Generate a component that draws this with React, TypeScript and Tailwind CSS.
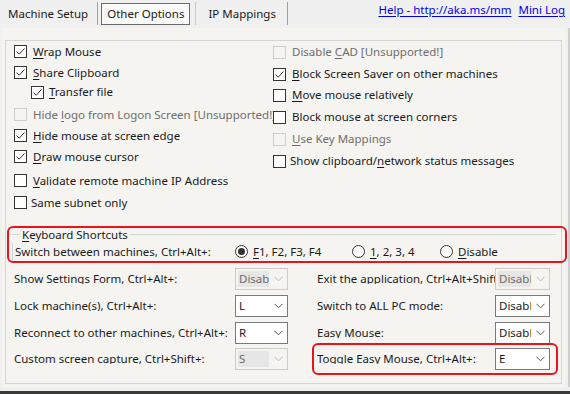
import { ReactNode } from "react";

const U = ({ children }: { children: ReactNode }) => <span className="underline underline-offset-2">{children}</span>;

const Check = ({ checked, disabled }: { checked?: boolean; disabled?: boolean }) => (
  <span
    className={`flex h-[13px] w-[13px] shrink-0 items-center justify-center border ${
      disabled ? "border-[#cccccc] bg-[#f5f4f1]" : "border-[#333333] bg-white"
    }`}
  >
    {checked && (
      <svg width="11" height="11" viewBox="0 0 11 11">
        <polyline points="1.5,5.5 4.2,8.2 9.5,2.5" fill="none" stroke="#333" strokeWidth="1" />
      </svg>
    )}
  </span>
);

const CheckRow = ({
  label,
  checked,
  disabled,
  gap = "gap-[6px]",
  h = "h-[21px]",
  cls = "",
}: {
  label: ReactNode;
  checked?: boolean;
  disabled?: boolean;
  gap?: string;
  h?: string;
  cls?: string;
}) => (
  <div className={`flex items-center ${gap} ${h} ${cls} ${disabled ? "text-[#6d6d6d]" : "text-[#1a1a1a]"}`}>
    <Check checked={checked} disabled={disabled} />
    <span className="whitespace-nowrap">{label}</span>
  </div>
);

const Radio = ({ on, label }: { on?: boolean; label: ReactNode }) => (
  <div className="flex items-center gap-[5px]">
    <span className="flex h-[13px] w-[13px] items-center justify-center rounded-full border border-[#333] bg-white">
      {on && <span className="h-[7px] w-[7px] rounded-full bg-[#333]" />}
    </span>
    <span className="whitespace-nowrap">{label}</span>
  </div>
);

const Combo = ({ value, disabled, w, tw }: { value: string; disabled?: boolean; w: string; tw: string }) => (
  <div
    className={`flex h-[22px] ${w} shrink-0 items-center border pl-[2px] pr-[4px] ${
      disabled ? "border-[#cccccc] bg-[#f5f4f1] text-[#6d6d6d]" : "border-[#7a7a7a] bg-white text-[#1a1a1a]"
    }`}
  >
    <span className={`${tw} flex h-[16px] items-center overflow-hidden whitespace-nowrap pl-[1px] ${disabled ? "bg-[#e6e6e6]" : ""}`}>
      {value}
    </span>
    <svg width="9" height="6" viewBox="0 0 9 6" className="ml-auto shrink-0">
      <polyline points="0.5,0.8 4.5,4.8 8.5,0.8" fill="none" stroke={disabled ? "#b8b8b8" : "#555"} strokeWidth="1" />
    </svg>
  </div>
);

const KeyRow = ({ label, children, cls = "" }: { label: string; children: ReactNode; cls?: string }) => (
  <div className={`flex h-[22px] items-center ${cls}`}>
    <span className="min-w-0 flex-1 overflow-hidden whitespace-nowrap">{label}</span>
    {children}
  </div>
);

export default function App() {
  return (
    <div
      className="relative h-[394px] w-[570px] overflow-hidden bg-[#f0f0f0] text-[11.5px] leading-none text-[#1a1a1a]"
      style={{ fontFamily: '"Noto Sans", "Segoe UI", sans-serif' }}
    >
      {/* tab strip */}
      <div className="flex h-[28px] items-start">
        <div className="flex items-center pl-[8px] pt-[2px]">
          <span className="h-[22px] pt-[5px] pr-[9px]">Machine Setup</span>
          <span className="h-[23px] w-px bg-[#a0a0a0]" />
          <span className="ml-[3px] h-[22px] border border-[#6b6b6b] bg-[#f9f9f9] px-[5px] pt-[4px]">Other Options</span>
          <span className="ml-[5px] h-[23px] w-px bg-[#c8c8c8]" />
          <span className="h-[22px] pl-[12px] pr-[11px] pt-[5px]">IP Mappings</span>
          <span className="h-[23px] w-px bg-[#a0a0a0]" />
        </div>
        <div className="ml-auto flex gap-[7px] pr-[5px] pt-[4px] text-[#0000ee]">
          <span className="underline underline-offset-2">Help - http://aka.ms/mm</span>
          <span className="underline underline-offset-2">Mini Log</span>
        </div>
      </div>

      <div className="flex">
        {/* panel */}
        <div className="ml-[2px] h-[359px] w-[563px] bg-[#f5f4f1] pl-[3px] pt-[12px]">
          <div className="h-[344px] w-[557px] border border-[#d6d5d2]">
            {/* checkbox columns */}
            <div className="flex">
              <div className="w-[259px] pl-[8px]">
                <CheckRow checked label={<><U>W</U>rap Mouse</>} />
                <CheckRow checked label={<><U>S</U>hare Clipboard</>} />
                <CheckRow checked h="h-[18px]" cls="pl-[17px]" gap="gap-[5px]" label={<><U>T</U>ransfer file</>} />
                <CheckRow disabled cls="mt-[3px]" label={<>Hide <U>l</U>ogo from Logon Screen [Unsupported!]</>} />
                <CheckRow checked label={<><U>H</U>ide mouse at screen edge</>} />
                <CheckRow checked label={<><U>D</U>raw mouse cursor</>} />
                <CheckRow cls="mt-[3px]" label={<><U>V</U>alidate remote machine IP Address</>} />
                <CheckRow gap="gap-[4px]" cls="mt-px" label="Same subnet only" />
              </div>
              <div className="pl-[8px]">
                <CheckRow disabled h="h-[22px]" label={<>Disable <U>C</U>AD [Unsupported!]</>} />
                <CheckRow checked h="h-[22px]" label={<><U>B</U>lock Screen Saver on other machines</>} />
                <CheckRow h="h-[22px]" cls="-mt-px" label={<><U>M</U>ove mouse relatively</>} />
                <CheckRow h="h-[22px]" label="Block mouse at screen corners" />
                <CheckRow disabled h="h-[22px]" label={<><U>U</U>se Key Mappings</>} />
                <CheckRow h="h-[22px]" gap="gap-[4px]" label={<>Show clipboard/<U>n</U>etwork status messages</>} />
              </div>
            </div>

            {/* keyboard shortcuts */}
            <div className="ml-[6px] mt-[16px] w-[544px]">
              <div className="flex items-center">
                <span className="h-px w-[8px] bg-[#d6d5d2]" />
                <span className="px-[2px]"><U>K</U>eyboard Shortcuts</span>
                <span className="h-px flex-1 bg-[#d6d5d2]" />
              </div>
              <div className="mt-[2px] flex h-[18px] items-center border-l border-[#d6d5d2] pl-[2px]">
                <span className="w-[220px] whitespace-nowrap">Switch between machines, Ctrl+Alt+:</span>
                <div className="w-[117px]"><Radio on label={<><U>F</U>1, F2, F3, F4</>} /></div>
                <div className="w-[88px]"><Radio label={<><U>1</U>, 2, 3, 4</>} /></div>
                <Radio label={<><U>D</U>isable</>} />
              </div>
            </div>

            {/* hotkeys */}
            <div className="mt-[7px] flex gap-[29px] pl-[8px]">
              <div className="flex w-[274px] flex-col gap-[5px]">
                <KeyRow label="Show Settings Form, Ctrl+Alt+:"><Combo disabled value="Disable" w="w-[53px]" tw="w-[31px]" /></KeyRow>
                <KeyRow label="Lock machine(s), Ctrl+Alt+:"><Combo value="L" w="w-[53px]" tw="w-[31px]" /></KeyRow>
                <KeyRow label="Reconnect to other machines, Ctrl+Alt+:"><Combo value="R" w="w-[53px]" tw="w-[31px]" /></KeyRow>
                <KeyRow label="Custom screen capture, Ctrl+Shift+:" cls="-mt-px"><Combo disabled value="S" w="w-[53px]" tw="w-[31px]" /></KeyRow>
              </div>
              <div className="flex w-[233px] flex-col gap-[5px]">
                <KeyRow label="Exit the application, Ctrl+Alt+Shift+:"><Combo disabled value="Disable" w="w-[55px]" tw="w-[33px]" /></KeyRow>
                <KeyRow label="Switch to ALL PC mode:"><Combo value="Disable" w="w-[55px]" tw="w-[33px]" /></KeyRow>
                <KeyRow label="Easy Mouse:"><Combo value="Disable" w="w-[55px]" tw="w-[33px]" /></KeyRow>
                <KeyRow label="Toggle Easy Mouse, Ctrl+Alt+:" cls="-mt-px"><Combo value="E" w="w-[55px]" tw="w-[33px]" /></KeyRow>
              </div>
            </div>
          </div>
        </div>
        <div className="ml-[3px] h-[359px] w-[2px] bg-[#cfcfcf]" />
      </div>
      <div className="absolute bottom-0 left-0 h-[3px] w-full bg-[#3a3a3a]" />

      {/* annotation highlights */}
      <div className="pointer-events-none absolute left-[7px] top-[226px] h-[37px] w-[560px] rounded-[6px] border-2 border-[#e8141b]" />
      <div className="pointer-events-none absolute left-[312px] top-[343px] h-[32px] w-[246px] rounded-[6px] border-2 border-[#e8141b]" />
    </div>
  );
}
